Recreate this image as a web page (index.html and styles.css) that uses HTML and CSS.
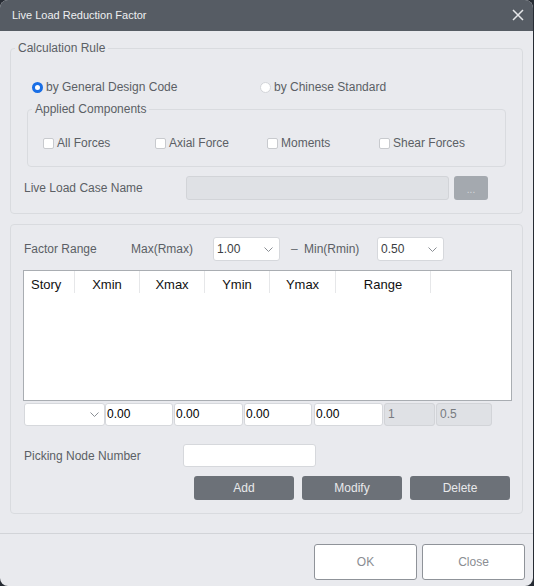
FILE: index.html
```html
<!DOCTYPE html>
<html lang="en">
<head>
<meta charset="utf-8">
<title>Live Load Reduction Factor</title>
<link rel="stylesheet" href="styles.css">
</head>
<body>
<div class="dialog">
  <div class="titlebar">
    <span class="title">Live Load Reduction Factor</span>
    <svg class="close-x" width="12" height="12" viewBox="0 0 12 12"><path d="M1 1 L11 11 M11 1 L1 11" stroke="#e6e7e9" stroke-width="1.5" fill="none"/></svg>
  </div>
  <div class="body">
    <fieldset class="group g1">
      <legend>Calculation Rule</legend>
      <div class="radios">
        <label class="opt radio-col"><span class="radio on"></span>by General Design Code</label>
        <label class="opt"><span class="radio"></span>by Chinese Standard</label>
      </div>
      <fieldset class="sub">
        <legend>Applied Components</legend>
        <div class="checks">
          <label class="opt"><span class="check"></span>All Forces</label>
          <label class="opt"><span class="check"></span>Axial Force</label>
          <label class="opt"><span class="check"></span>Moments</label>
          <label class="opt"><span class="check"></span>Shear Forces</label>
        </div>
      </fieldset>
      <div class="case-row">
        <span class="lbl case-lbl">Live Load Case Name</span>
        <div class="field disabled case-input"></div>
        <div class="dots-btn">...</div>
      </div>
    </fieldset>

    <fieldset class="group g2">
      <div class="factor-row">
        <span class="lbl w-factor">Factor Range</span>
        <span class="lbl w-max">Max(Rmax)</span>
        <div class="field combo"><span>1.00</span><svg class="chev" width="9" height="5" viewBox="0 0 9 5"><path d="M0.5 0.5 L4.5 4.5 L8.5 0.5" stroke="#8a8e94" stroke-width="1" fill="none"/></svg></div>
        <span class="lbl dash">–</span>
        <span class="lbl w-min">Min(Rmin)</span>
        <div class="field combo"><span>0.50</span><svg class="chev" width="9" height="5" viewBox="0 0 9 5"><path d="M0.5 0.5 L4.5 4.5 L8.5 0.5" stroke="#8a8e94" stroke-width="1" fill="none"/></svg></div>
      </div>

      <div class="grid">
        <div class="grid-head">
          <div class="hc c-story left">Story</div>
          <div class="hc c-x">Xmin</div>
          <div class="hc c-x">Xmax</div>
          <div class="hc c-x">Ymin</div>
          <div class="hc c-y">Ymax</div>
          <div class="hc c-range">Range</div>
        </div>
      </div>

      <div class="edit-row">
        <div class="field e-sel"><svg class="chev" width="9" height="5" viewBox="0 0 9 5"><path d="M0.5 0.5 L4.5 4.5 L8.5 0.5" stroke="#8a8e94" stroke-width="1" fill="none"/></svg></div>
        <div class="field val e1">0.00</div>
        <div class="field val e2">0.00</div>
        <div class="field val e3">0.00</div>
        <div class="field val e4">0.00</div>
        <div class="field disabled dval e5">1</div>
        <div class="field disabled dval e6">0.5</div>
      </div>

      <div class="pick-row">
        <span class="lbl pick-lbl">Picking Node Number</span>
        <div class="field pick-input"></div>
      </div>

      <div class="btn-row">
        <div class="dark-btn">Add</div>
        <div class="dark-btn">Modify</div>
        <div class="dark-btn">Delete</div>
      </div>
    </fieldset>
  </div>
  <div class="footer">
    <div class="white-btn">OK</div>
    <div class="white-btn">Close</div>
  </div>
</div>
</body>
</html>
```

FILE: styles.css
```css
* { box-sizing: border-box; }
html, body {
  margin: 0;
  padding: 0;
  background: #262b33;
}
body {
  font-family: "Liberation Sans", Arial, sans-serif;
  font-size: 12px;
  color: #5b5f65;
}
.dialog {
  width: 533px;
  height: 586px;
  background: #e9eaee;
  border-radius: 8px;
  overflow: hidden;
  display: flex;
  flex-direction: column;
}
.titlebar {
  height: 31px;
  background: #565c64;
  display: flex;
  align-items: center;
  justify-content: space-between;
  padding: 0 9px 1px 12px;
}
.title {
  color: #eef0f2;
  font-size: 11px;
}
.close-x { display: block; }

.body { display: flex; flex-direction: column; }

fieldset {
  margin: 0;
  padding: 0;
  border: 1px solid #d9dbdf;
  border-radius: 4px;
  min-width: 0;
}
legend {
  padding: 0 3px;
  margin-left: 4px;
  line-height: 14px;
  font-size: 12px;
  color: #5b5f65;
}
.g1 {
  margin: 10px 10px 0 10px;
  padding: 0 0 13px 0;
}
.radios {
  display: flex;
  margin-top: 25px;
  padding-left: 21px;
  height: 14px;
}
.radio-col { width: 228px; }
.opt {
  display: flex;
  align-items: center;
  height: 14px;
  line-height: 14px;
  color: #5b5f65;
  white-space: nowrap;
}
.radio {
  width: 11px;
  height: 11px;
  border-radius: 50%;
  background: #fff;
  border: 1px solid #d3d5d9;
  margin-right: 3px;
  flex: none;
}
.radio.on {
  border: 3.5px solid #1a6fe6;
}
.sub {
  margin: 8px 16px 0 16px;
  padding: 0 0 16px 0;
}
.sub legend { margin-left: 4px; }
.checks {
  display: grid;
  grid-template-columns: 112px 112px 112px 112px;
  padding-left: 15px;
  margin-top: 20px;
}
.check {
  width: 11px;
  height: 11px;
  border: 1px solid #c8cace;
  border-radius: 2px;
  background: #fff;
  margin-right: 3px;
  flex: none;
}
.case-row {
  display: flex;
  align-items: center;
  margin-top: 9px;
  padding-left: 13px;
  height: 24px;
}
.lbl { white-space: nowrap; color: #5b5f65; }
.case-lbl { width: 162px; }
.field {
  height: 23px;
  background: #fff;
  border: 1px solid #d6d8dc;
  border-radius: 3px;
}
.field.disabled {
  background: #dfe1e5;
  border-color: #d2d4d8;
}
.case-input { width: 263px; height: 24px; }
.dots-btn {
  width: 34px;
  height: 24px;
  margin-left: 5px;
  background: #a4a9af;
  border-radius: 3px;
  color: #d6d9dc;
  font-size: 10px;
  display: flex;
  align-items: center;
  justify-content: center;
  padding-top: 2px;
}

.g2 {
  margin: 10px 10px 0 10px;
  padding: 12px 10px 13px 12px;
}
.factor-row {
  display: flex;
  align-items: center;
  height: 24px;
}
.w-factor { width: 108px; padding-left: 1px; }
.w-max { width: 82px; }
.w-min { width: 73px; }
.dash { width: 13px; margin-left: 11px; color: #6a6e74; }
.combo {
  width: 67px;
  height: 24px;
  display: flex;
  align-items: center;
  justify-content: space-between;
  padding: 0 6px 0 3px;
  color: #3a3d42;
}
.chev { display: block; }

.grid {
  margin-top: 9px;
  width: 489px;
  height: 131px;
  background: #fff;
  border: 1px solid #a9adb2;
}
.grid-head {
  display: flex;
  height: 22px;
}
.hc {
  height: 22px;
  line-height: 20px;
  padding-top: 4px;
  font-size: 13px;
  color: #111;
  text-align: center;
  border-right: 1px solid #e6e7e9;
}
.hc.left { text-align: left; padding-left: 7px; }
.c-story { width: 51px; }
.c-x { width: 65px; }
.c-y { width: 66px; }
.c-range { width: 95px; }

.edit-row {
  display: flex;
  margin-top: 2px;
  margin-left: 1px;
  height: 23px;
}
.edit-row .field {
  height: 23px;
  line-height: 21px;
  font-size: 12px;
}
.e-sel {
  width: 81px;
  display: flex;
  align-items: center;
  justify-content: flex-end;
  padding-right: 5px;
}
.val { color: #000; padding-left: 1px; }
.dval { color: #777b80; padding-left: 3px; }
.e1 { width: 68px; }
.e2 { width: 69px; margin-left: 1px; }
.e3 { width: 68px; margin-left: 1px; }
.e4 { width: 69px; margin-left: 2px; }
.e5 { width: 51px; margin-left: 1px; }
.e6 { width: 56px; margin-left: 1px; }

.pick-row {
  display: flex;
  align-items: center;
  margin-top: 18px;
  height: 23px;
  padding-left: 1px;
}
.pick-lbl { width: 159px; }
.pick-input { width: 133px; height: 23px; }

.btn-row {
  display: flex;
  justify-content: flex-end;
  gap: 8px;
  margin-top: 9px;
  padding-right: 2px;
}
.dark-btn {
  width: 100px;
  height: 24px;
  background: #6c7178;
  border-radius: 3px;
  color: #e8e9eb;
  display: flex;
  align-items: center;
  justify-content: center;
}

.footer {
  margin-top: 19px;
  border-top: 1px solid #d2d4d8;
  display: flex;
  justify-content: flex-end;
  gap: 5px;
  padding: 10px 8px 0 0;
}
.white-btn {
  width: 103px;
  height: 36px;
  background: #fff;
  border: 1px solid #8f9399;
  border-radius: 3px;
  color: #8a8d92;
  font-size: 12px;
  display: flex;
  align-items: center;
  justify-content: center;
}
```
